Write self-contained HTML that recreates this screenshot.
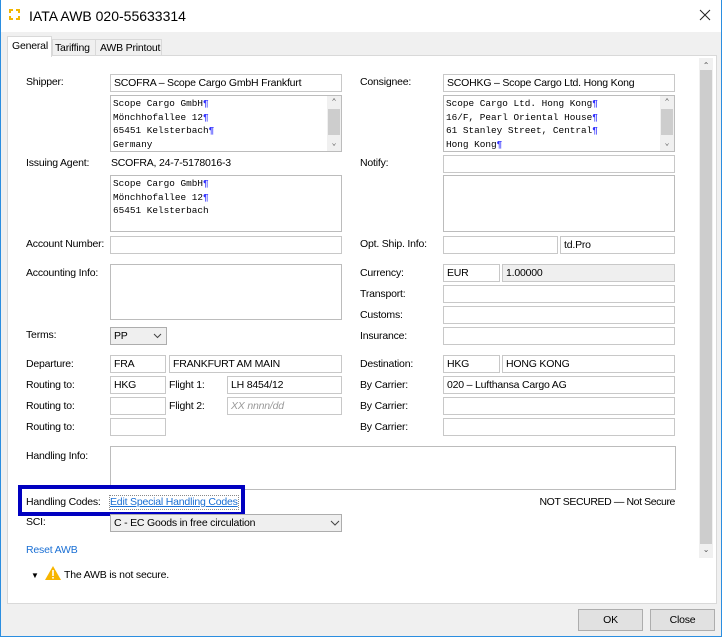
<!DOCTYPE html>
<html><head><meta charset="utf-8"><style>
*{box-sizing:border-box;margin:0;padding:0}
body{width:722px;height:637px;position:relative;background:#f0f0f0;font-family:"Liberation Sans",sans-serif;font-size:10.5px;letter-spacing:-0.2px;color:#000;overflow:hidden}
.a{position:absolute}
.win{left:0;top:0;width:722px;height:637px;border:1px solid #2b8ee0;border-top:none}
.tb{left:1px;top:0;width:720px;height:32px;background:#fff}
.in{position:absolute;height:18px;border:1px solid #c8c8c8;background:#fff;padding:2px 3px;line-height:12px;white-space:nowrap}
.ta{position:absolute;border:1px solid #bcbcbc;background:#fff;font-family:"Liberation Mono",monospace;font-size:9.4px;letter-spacing:0;line-height:13.6px;padding:1px 2px;white-space:pre;overflow:hidden}
.p{color:#3030ff;font-weight:bold}
.l{position:absolute;line-height:13px;white-space:nowrap}
.gr{background:#efefef}
.sb{position:absolute;right:0;top:0;bottom:0;width:14px;background:#f0f0f0}
.th{position:absolute;left:1px;right:1px;background:#cdcdcd}
.ar{position:absolute;left:0;width:14px;text-align:center;font-size:8px;color:#555;line-height:12px}
.btn{position:absolute;height:22px;border:1px solid #adadad;background:#e1e1e1;text-align:center;line-height:20px}
</style></head><body>
<div class="a tb"></div>
<div class="a" style="left:9px;top:9px;width:11px;height:11px">
<div class="a" style="left:0;top:0;width:4px;height:4px;border-left:2px solid #f2b600;border-top:2px solid #f2b600"></div>
<div class="a" style="right:0;top:0;width:4px;height:4px;border-right:2px solid #f2b600;border-top:2px solid #f2b600"></div>
<div class="a" style="left:0;bottom:0;width:4px;height:4px;border-left:2px solid #f2b600;border-bottom:2px solid #f2b600"></div>
<div class="a" style="right:0;bottom:0;width:4px;height:4px;border-right:2px solid #f2b600;border-bottom:2px solid #f2b600"></div>
</div>
<div class="l" style="left:29px;top:8px;font-size:14px;line-height:17px;letter-spacing:0">IATA AWB 020-55633314</div>
<svg class="a" style="left:699px;top:9px" width="12" height="12"><path d="M1 1L11 11M11 1L1 11" stroke="#222" stroke-width="1"/></svg>

<div class="a" style="left:52px;top:39px;width:44px;height:17px;border:1px solid #d9d9d9;background:#f0f0f0"></div>
<div class="l" style="left:55px;top:42px">Tariffing</div>
<div class="a" style="left:95px;top:39px;width:67px;height:17px;border:1px solid #d9d9d9;background:#f0f0f0"></div>
<div class="l" style="left:100px;top:42px">AWB Printout</div>
<div class="a" style="left:7px;top:55px;width:710px;height:549px;border:1px solid #d9d9d9;background:#fff"></div>
<div class="a" style="left:7px;top:36px;width:45px;height:21px;border:1px solid #d9d9d9;border-bottom:none;background:#fff"></div>
<div class="l" style="left:12px;top:40px">General</div>

<div class="a" style="left:699px;top:58px;width:14px;height:500px;background:#f0f0f0">
<div class="ar" style="top:2px">&#8963;</div>
<div class="th" style="top:12px;height:474px"></div>
<div class="ar" style="bottom:2px">&#8964;</div>
</div>

<div class="l" style="left:26px;top:76px">Shipper:</div>
<div class="in" style="left:110px;top:74px;width:232px">SCOFRA – Scope Cargo GmbH Frankfurt</div>
<div class="ta" style="left:110px;top:95px;width:232px;height:57px">Scope Cargo GmbH<span class="p">¶</span>
Mönchhofallee 12<span class="p">¶</span>
65451 Kelsterbach<span class="p">¶</span>
Germany<div class="sb"><div class="ar" style="top:1px">&#8963;</div><div class="th" style="top:13px;height:26px"></div><div class="ar" style="bottom:1px">&#8964;</div></div></div>

<div class="l" style="left:26px;top:157px">Issuing Agent:</div>
<div class="l" style="left:111px;top:157px">SCOFRA, 24-7-5178016-3</div>
<div class="ta" style="left:110px;top:175px;width:232px;height:57px">Scope Cargo GmbH<span class="p">¶</span>
Mönchhofallee 12<span class="p">¶</span>
65451 Kelsterbach</div>

<div class="l" style="left:26px;top:238px">Account Number:</div>
<div class="in" style="left:110px;top:236px;width:232px"></div>
<div class="l" style="left:26px;top:267px">Accounting Info:</div>
<div class="ta" style="left:110px;top:264px;width:232px;height:56px"></div>

<div class="l" style="left:26px;top:329px">Terms:</div>
<div class="in gr" style="left:110px;top:327px;width:57px;border-color:#adadad">PP<svg class="a" style="left:42px;top:5px" width="9" height="6"><path d="M1 1L4.5 4.5L8 1" stroke="#444" fill="none"/></svg></div>

<div class="l" style="left:26px;top:358px">Departure:</div>
<div class="in" style="left:110px;top:355px;width:56px">FRA</div>
<div class="in" style="left:169px;top:355px;width:173px">FRANKFURT AM MAIN</div>
<div class="l" style="left:26px;top:379px">Routing to:</div>
<div class="in" style="left:110px;top:376px;width:56px">HKG</div>
<div class="l" style="left:169px;top:379px">Flight 1:</div>
<div class="in" style="left:227px;top:376px;width:115px">LH 8454/12</div>
<div class="l" style="left:26px;top:400px">Routing to:</div>
<div class="in" style="left:110px;top:397px;width:56px"></div>
<div class="l" style="left:169px;top:400px">Flight 2:</div>
<div class="in" style="left:227px;top:397px;width:115px;color:#999;font-style:italic">XX nnnn/dd</div>
<div class="l" style="left:26px;top:421px">Routing to:</div>
<div class="in" style="left:110px;top:418px;width:56px"></div>

<div class="l" style="left:26px;top:450px">Handling Info:</div>
<div class="ta" style="left:110px;top:446px;width:566px;height:44px"></div>

<div class="a" style="left:18px;top:485px;width:227px;height:31px;border:4px solid #0000c0;background:#fff"></div>
<div class="l" style="left:26px;top:496px">Handling Codes:</div>
<div class="l" style="left:110px;top:496px;color:#1a6fd4;text-decoration:underline;outline:1px dotted #888">Edit Special Handling Codes</div>
<div class="l" style="left:26px;top:516px">SCI:</div>
<div class="in gr" style="left:110px;top:514px;width:232px;border-color:#adadad">C - EC Goods in free circulation<svg class="a" style="left:219px;top:5px" width="10" height="6"><path d="M1 1L5 5L9 1" stroke="#444" fill="none"/></svg></div>
<div class="l" style="left:26px;top:544px;color:#1a6fd4">Reset AWB</div>
<div class="l" style="left:31px;top:569px;font-size:8px">&#9660;</div>
<svg class="a" style="left:44px;top:565px" width="18" height="16"><path d="M9 1L17 15H1Z" fill="#f7b500"/><rect x="8.2" y="5" width="1.6" height="6" fill="#fff"/><rect x="8.2" y="12" width="1.6" height="1.6" fill="#fff"/></svg>
<div class="l" style="left:64px;top:569px">The AWB is not secure.</div>

<div class="l" style="left:360px;top:76px">Consignee:</div>
<div class="in" style="left:443px;top:74px;width:232px">SCOHKG – Scope Cargo Ltd. Hong Kong</div>
<div class="ta" style="left:443px;top:95px;width:232px;height:57px">Scope Cargo Ltd. Hong Kong<span class="p">¶</span>
16/F, Pearl Oriental House<span class="p">¶</span>
61 Stanley Street, Central<span class="p">¶</span>
Hong Kong<span class="p">¶</span><div class="sb"><div class="ar" style="top:1px">&#8963;</div><div class="th" style="top:13px;height:26px"></div><div class="ar" style="bottom:1px">&#8964;</div></div></div>
<div class="l" style="left:360px;top:157px">Notify:</div>
<div class="in" style="left:443px;top:155px;width:232px"></div>
<div class="ta" style="left:443px;top:175px;width:232px;height:57px"></div>
<div class="l" style="left:360px;top:238px">Opt. Ship. Info:</div>
<div class="in" style="left:443px;top:236px;width:115px"></div>
<div class="in" style="left:560px;top:236px;width:115px">td.Pro</div>
<div class="l" style="left:360px;top:267px">Currency:</div>
<div class="in" style="left:443px;top:264px;width:57px">EUR</div>
<div class="in gr" style="left:502px;top:264px;width:173px">1.00000</div>
<div class="l" style="left:360px;top:288px">Transport:</div>
<div class="in" style="left:443px;top:285px;width:232px"></div>
<div class="l" style="left:360px;top:309px">Customs:</div>
<div class="in" style="left:443px;top:306px;width:232px"></div>
<div class="l" style="left:360px;top:330px">Insurance:</div>
<div class="in" style="left:443px;top:327px;width:232px"></div>
<div class="l" style="left:360px;top:358px">Destination:</div>
<div class="in" style="left:443px;top:355px;width:57px">HKG</div>
<div class="in" style="left:502px;top:355px;width:173px">HONG KONG</div>
<div class="l" style="left:360px;top:379px">By Carrier:</div>
<div class="in" style="left:443px;top:376px;width:232px">020 – Lufthansa Cargo AG</div>
<div class="l" style="left:360px;top:400px">By Carrier:</div>
<div class="in" style="left:443px;top:397px;width:232px"></div>
<div class="l" style="left:360px;top:421px">By Carrier:</div>
<div class="in" style="left:443px;top:418px;width:232px"></div>
<div class="l" style="right:47px;top:496px;letter-spacing:-0.4px">NOT SECURED — Not Secure</div>

<div class="btn" style="left:578px;top:609px;width:65px">OK</div>
<div class="btn" style="left:650px;top:609px;width:65px">Close</div>
<div class="a win"></div>
</body></html>
